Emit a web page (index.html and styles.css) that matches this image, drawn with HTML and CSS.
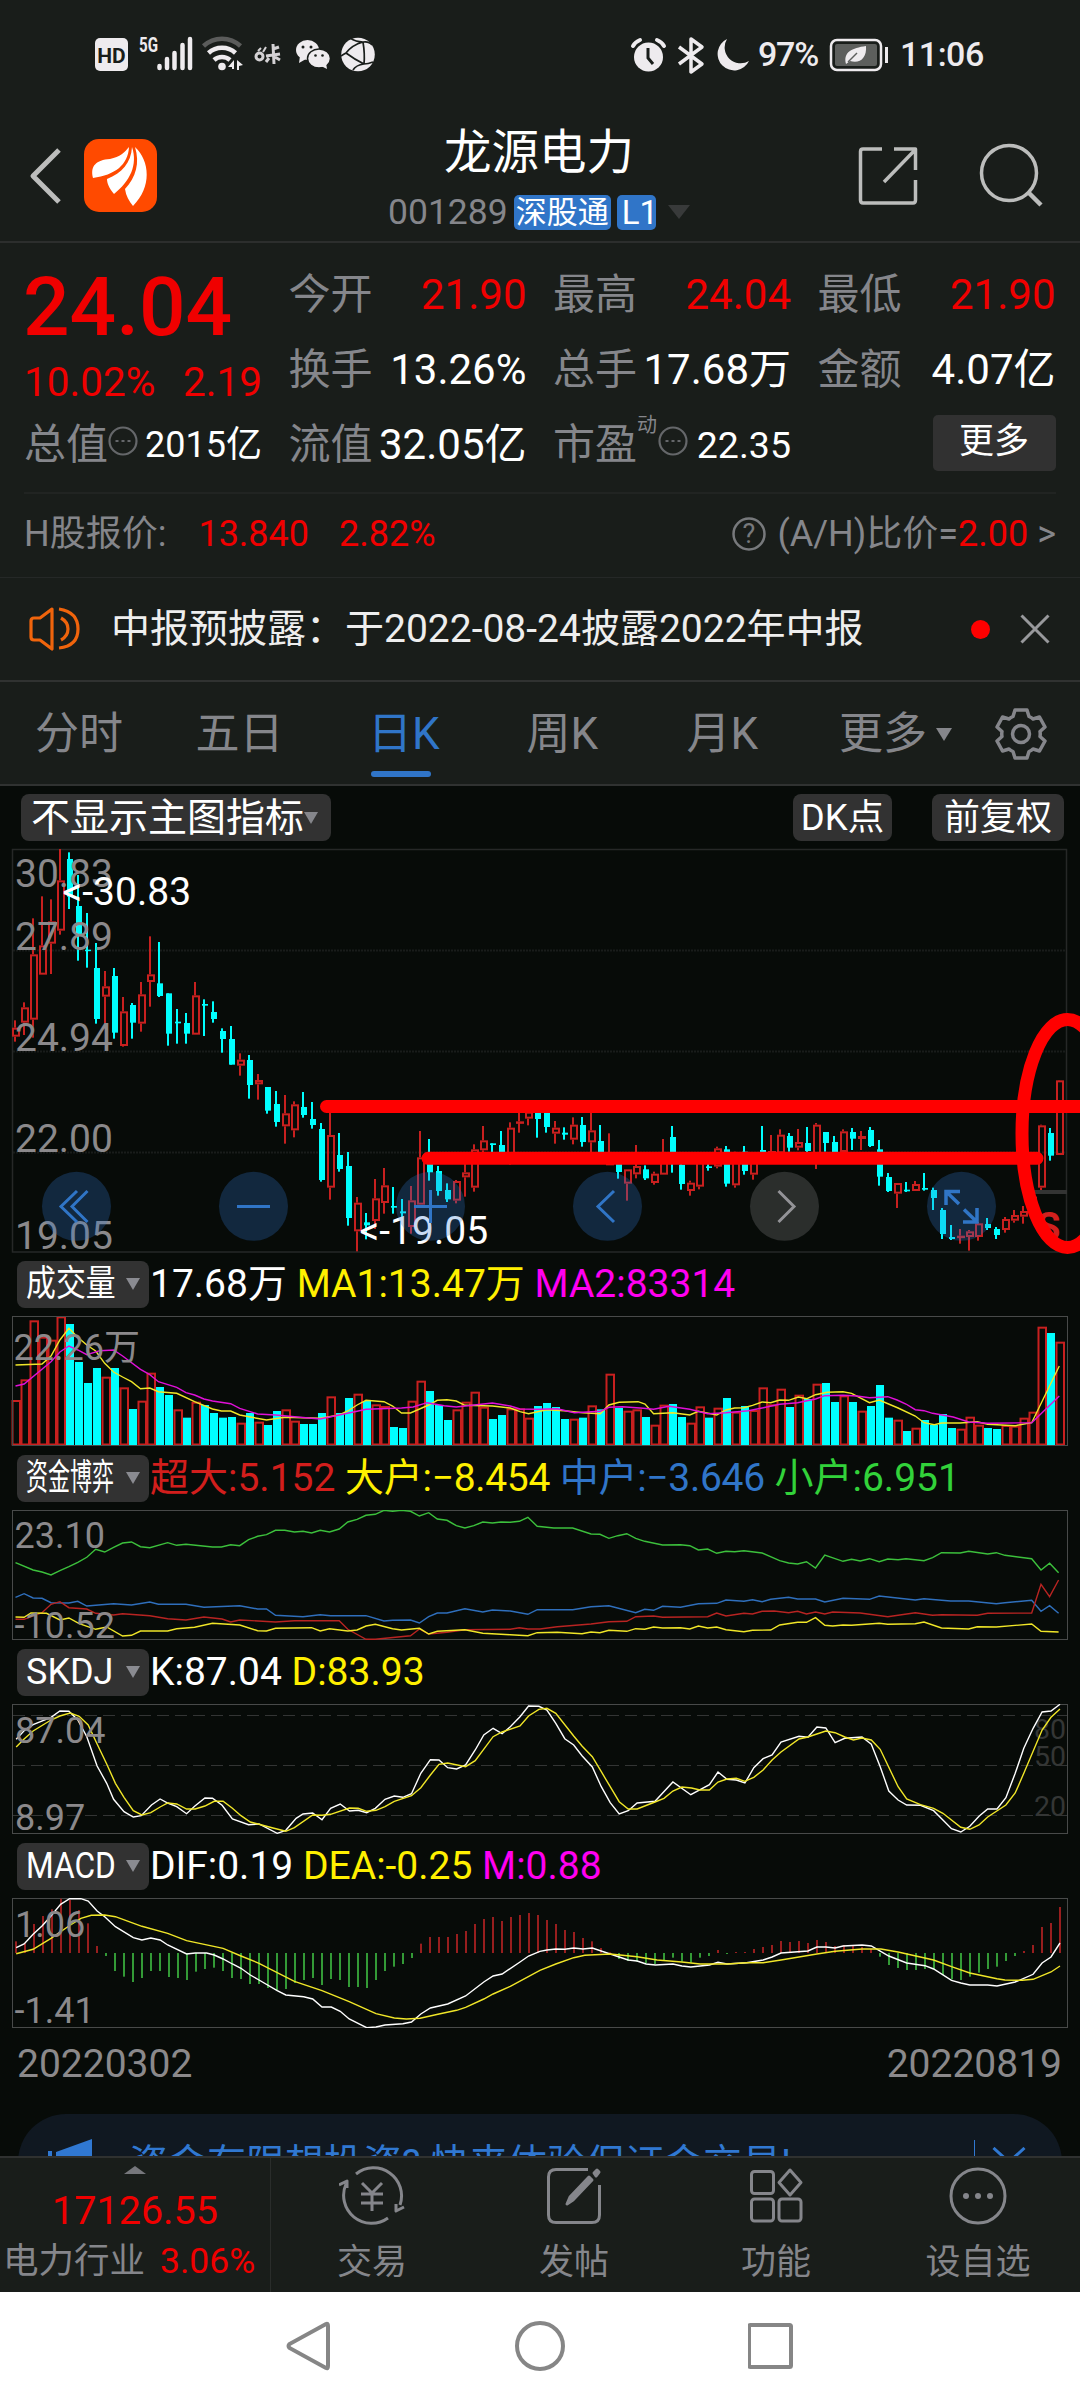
FILE: index.html
```html
<!DOCTYPE html>
<html lang="zh-CN">
<head>
<meta charset="utf-8">
<title>龙源电力 001289</title>
<link rel="stylesheet" href="styles.css">
</head>
<body>
<div class="app">
  <div class="status">
    <div class="status-left">
      <svg width="300" height="60" viewBox="85 25 300 60">
        <rect x="95" y="38" width="33" height="33" rx="5" fill="#eeebee"/>
        <text x="111.500" y="62.500" class="hd">HD</text>
        <text x="139" y="52" class="fiveg" textLength="19" lengthAdjust="spacingAndGlyphs">5G</text>
        <path d="M159.500 66v2M167 59v9M174.500 53v15M182.500 45v23M190 39v29" stroke="#eeebee" stroke-width="4.500" stroke-linecap="round" fill="none"/>
        <g fill="none" stroke="#eeebee" stroke-width="4.500">
          <path d="M203.500 46a27 27 0 0 1 37 0" stroke="#5b5c5b"/>
          <path d="M208.500 53a20 20 0 0 1 27 0"/>
          <path d="M214 60a12 12 0 0 1 16 0"/>
        </g>
        <circle cx="222" cy="66.500" r="3.800" fill="#eeebee"/>
        <path d="M228 67l6-7v9h-2v-2zM237 60l6 5-4 1v4h-2z" fill="#eeebee"/>
        <g fill="none" stroke="#d4d2d4" stroke-width="3">
          <circle cx="259.500" cy="56.500" r="3.500"/><path d="M258 51l3-3M263 52l3-5" stroke-width="2"/><path d="M273 44l1 20M266 56l14-2M273 49l6-2M269 58l-3 4M275 57l5 3"/>
        </g>
        <g fill="#eeebee">
          <ellipse cx="307.500" cy="50" rx="11.500" ry="10"/><path d="M300 56l-1 7 7-4z"/>
          <ellipse cx="319" cy="58.500" rx="11.500" ry="9.500" stroke="#191d1a" stroke-width="1.500"/><path d="M321 66l6 3-1-6z"/>
        </g>
        <g fill="#191d1a"><circle cx="303" cy="47" r="1.500"/><circle cx="311" cy="47" r="1.500"/><circle cx="315.500" cy="55.500" r="1.300"/><circle cx="322.500" cy="55.500" r="1.300"/></g>
        <circle cx="358" cy="54.500" r="16.800" fill="#eeebee"/>
        <path d="M350 38q6 4 13 4M363 42q6-1 9 3M363 42q2 12 1 22M364 64q-8 1-11 6M346 53q8 6 18 11M346 53q6-8 17-11M341 56q3-2 5-3M364 64q4 0 9-2" stroke="#191d1a" stroke-width="1.700" fill="none"/>
      </svg>
    </div>
    <div class="status-right">
      <svg width="120" height="40" viewBox="630 34 120 40">
        <circle cx="648.500" cy="56" r="14.500" fill="#eeebee"/>
        <path d="M648 47v10l5 6" stroke="#191d1a" stroke-width="3" fill="none"/>
        <path d="M633 45a14 14 0 0 1 7-6M657 39a14 14 0 0 1 7 6" stroke="#eeebee" stroke-width="4" stroke-linecap="round" fill="none"/>
        <path d="M679 46l23 17-11 8V38l11 8-23 17" stroke="#eeebee" stroke-width="3.500" fill="none" stroke-linejoin="round"/>
        <path d="M727 38a16.500 16.500 0 1 0 22 22a16 16 0 0 1-22-22z" fill="#eeebee"/>
      </svg>
      <span class="pct">97%</span>
      <svg width="60" height="34" viewBox="829 38 60 34">
        <rect x="831" y="40" width="50" height="30" rx="6" fill="none" stroke="#eeebee" stroke-width="2.500"/>
        <rect x="835" y="44" width="42" height="22" rx="2" fill="#5d5f5d"/>
        <path d="M846 64c-3-12 6-16 20-18c1 12-6 18-16 15zM846 65l12-12" fill="#eeebee"/>
        <path d="M848 62l9-9" stroke="#5d5f5d" stroke-width="1.500"/>
        <path d="M886.500 47v16" stroke="#eeebee" stroke-width="3"/>
      </svg>
      <span class="clock">11:06</span>
    </div>
  </div>

  <header class="head">
    <div class="head-left">
      <svg width="34" height="60" viewBox="0 0 34 60"><path d="M30 4L4 30L30 56" class="ic-head" stroke-width="5"/></svg>
      <svg width="73" height="73" viewBox="0 0 73 73">
        <rect width="73" height="73" rx="15" fill="#ff4a00"/>
        <path d="M9 39C6 27 12 21 26 20C36 18 41 13 45 8C44 26 31 36 9 39Z" fill="#fff"/>
        <path d="M30 55C25 49 23 44 23 40C38 34 47 24 48 8C54 26 46 42 30 55Z" fill="#fff"/>
        <path d="M49 67C45 62 42 57 41 50C52 38 56 24 51 8C66 22 68 48 49 67Z" fill="#fff"/>
      </svg>
    </div>
    <div class="head-mid">
      <h1 class="title">龙源电力</h1>
      <div class="sub">
        <span>001289</span><span class="badge">深股通</span><span class="badge badge-l1">L1</span>
        <svg class="tri" width="22" height="14" viewBox="0 0 22 14"><path d="M0 0h22L11 14z" fill="#383a3a"/></svg>
      </div>
    </div>
    <div class="head-right">
      <svg width="60" height="60" viewBox="0 0 60 60"><path d="M24 3H5Q2.500 3 2.500 5.500V54Q2.500 57 5 57H55Q57.500 57 57.500 54V34M36 3H57.500V24M57 4L26 36" class="ic-head" stroke-width="3.500"/></svg>
      <svg width="66" height="66" viewBox="0 0 66 66"><circle cx="30" cy="30" r="27.500" class="ic-head" stroke-width="3.500"/><path d="M49 49L62 62" class="ic-head" stroke-width="4.500"/></svg>
    </div>
  </header>

  <section class="quote">
    <div class="last">
      <div class="price">24.04</div>
      <div class="chg"><span>10.02%</span><span>2.19</span></div>
    </div>
    <div class="cell"><span>今开</span><b class="up">21.90</b></div>
    <div class="cell"><span>最高</span><b class="up">24.04</b></div>
    <div class="cell"><span>最低</span><b class="up">21.90</b></div>
    <div class="cell"><span>换手</span><b>13.26%</b></div>
    <div class="cell"><span>总手</span><b>17.68万</b></div>
    <div class="cell"><span>金额</span><b>4.07亿</b></div>
    <div class="cell"><span class="with-dots">总值<svg class="dots" width="30" height="30" viewBox="0 0 30 30"><circle cx="15" cy="15" r="13.500"/><path d="M7.500 15h3M13.500 15h3M19.500 15h3"/></svg></span><b class="small">2015亿</b></div>
    <div class="cell"><span>流值</span><b>32.05亿</b></div>
    <div class="cell"><span class="with-dots">市盈<sup>动</sup><svg class="dots" width="30" height="30" viewBox="0 0 30 30"><circle cx="15" cy="15" r="13.500"/><path d="M7.500 15h3M13.500 15h3M19.500 15h3"/></svg></span><b class="mid">22.35</b></div>
    <div class="cell cell-more"><span class="more">更多</span></div>
  </section>

  <section class="hshare">
    <span>H股报价:</span><span class="up h1v">13.840</span><span class="up h2v">2.82%</span>
    <span class="ratio">
      <svg width="34" height="34" viewBox="0 0 34 34"><circle cx="17" cy="17" r="15.500" fill="none" stroke="#77797c" stroke-width="2.500"/><text x="17" y="26" class="qm">?</text></svg>
      <span>(A/H)比价=<em class="up">2.00</em> &gt;</span>
    </span>
  </section>

  <section class="notice">
    <svg width="54" height="46" viewBox="0 0 54 46" fill="none" stroke="#f0640c" stroke-width="3.200" stroke-linejoin="round"><path d="M24 3L12 12H6Q3 12 3 15V31Q3 34 6 34H12L24 43ZM33 12Q40 16 40 23T33 34M31 3Q50 6 50 23T31 42"/></svg>
    <span class="notice-text">中报预披露：于2022-08-24披露2022年中报</span>
    <i class="dot"></i>
    <svg width="30" height="30" viewBox="0 0 30 30"><path d="M1.500 1.500L28.500 28.500M28.500 1.500L1.500 28.500" stroke="#98999c" stroke-width="3"/></svg>
  </section>

  <nav class="tabs">
    <span>分时</span><span>五日</span><span class="on">日K</span><span>周K</span><span>月K</span>
    <span class="tab-more">更多<svg width="16" height="13" viewBox="0 0 16 13"><path d="M0 0h16L8 13z" fill="#85868b"/></svg></span>
    <svg width="52" height="52" viewBox="-26 -26 52 52" fill="none" stroke="#85868b" stroke-width="3.500" stroke-linejoin="round"><path d="M-6 -24H6L8 -17.500Q10.500 -16.500 12 -15L18.500 -17L24 -7L19 -2.500Q19.500 0 19 2.500L24 7L18.500 17L12 15Q10.500 16.500 8 17.500L6 24H-6L-8 17.500Q-10.500 16.500 -12 15L-18.500 17L-24 7L-19 2.500Q-19.500 0 -19 -2.500L-24 -7L-18.500 -17L-12 -15Q-10.500 -16.500 -8 -17.500Z"/><circle r="8.500"/></svg>
  </nav>

  <main class="charts">
    <div class="tools">
      <span class="chip chip-main">不显示主图指标<svg width="14" height="12" viewBox="0 0 14 12"><path d="M0 0h14L7 12z" fill="#85868b"/></svg></span>
      <span class="chip chip-dk">DK点</span>
      <span class="chip chip-fq">前复权</span>
    </div>

    <svg class="pane pane-main" width="1080" height="403" viewBox="0 849 1080 403">
      <path d="M13 950.500H1067M13 1051.500H1067M13 1152.500H1067" stroke="#191c1a" stroke-width="2" stroke-dasharray="2 1"/>
      <rect x="12.500" y="849.500" width="1054" height="402.500" fill="none" stroke="#262827" stroke-width="1.500"/>
      <rect x="1034" y="1190" width="33" height="4" fill="#333433"/>
      <g id="candles"></g>
      <g class="axis">
        <text x="15" y="886.500">30.83</text><text x="15" y="949.500">27.89</text><text x="15" y="1050.500">24.94</text><text x="15" y="1152">22.00</text><text x="15" y="1249">19.05</text>
      </g>
      <text x="1037" y="1240" class="sell">S</text>
      <g class="mark"><text x="62.500" y="905">&lt;-30.83</text><text x="359.500" y="1244">&lt;-19.05</text></g>
      <g fill="#3078d2" fill-opacity=".27">
        <circle cx="76.500" cy="1206.300" r="34.500"/><circle cx="253.500" cy="1206.300" r="34.500"/><circle cx="430.500" cy="1206.300" r="34.500"/><circle cx="607.500" cy="1206.300" r="34.500"/><circle cx="961.500" cy="1206.300" r="34.500"/>
      </g>
      <circle cx="784.500" cy="1206.300" r="34.500" fill="#8c8c90" fill-opacity=".27"/>
      <g fill="none" stroke="#3075c6" stroke-width="3">
        <path d="M77 1191L61 1206.500L77 1222M87.500 1191L72 1206.500L87.500 1222M237 1206.500H270M414 1206.500H447M430.500 1190V1223M614 1191L598 1206.500L614 1222"/>
        <path d="M946 1205V1191.500H960M946 1191.500L959 1204M964 1209.500L977 1222M963 1222H977V1208" stroke-width="3.500"/>
      </g>
      <path d="M778.500 1191L794 1206.500L778.500 1222" fill="none" stroke="#939397" stroke-width="3"/>
      <g fill="none" stroke="#ff0000" stroke-width="13" stroke-linecap="round">
        <path d="M326.500 1106.500H1090M428 1158.300H1037"/><ellipse cx="1067.500" cy="1133.500" rx="45.500" ry="114"/>
      </g>
    </svg>

    <div class="ind"><span class="chip chip-ind"><span class="w83">成交量</span><i></i></span><p><span>17.68万</span> <span class="y">MA1:13.47万</span> <span class="m">MA2:83314</span></p></div>
    <svg class="pane" width="1080" height="130" viewBox="0 1316 1080 130">
      <g id="volume"></g>
      <rect class="frame" x="12.500" y="1316.500" width="1055" height="129"/>
      <g id="volume-ma"></g>
      <g class="axis s"><text x="13.500" y="1360">22.26万</text></g>
    </svg>

    <div class="ind"><span class="chip chip-ind"><span class="w60">资金博弈</span><i></i></span><p><span class="r">超大:5.152</span> <span class="y neg">大户:−8.454</span> <span class="b neg">中户:−3.646</span> <span class="g">小户:6.951</span></p></div>
    <svg class="pane" width="1080" height="130" viewBox="0 1510 1080 130">
      <rect class="frame" x="12.500" y="1510.500" width="1055" height="129"/>
      <g id="funds"></g>
      <g class="axis s"><text x="14.500" y="1548">23.10</text><text x="14.500" y="1637.500">-10.52</text></g>
    </svg>

    <div class="ind"><span class="chip chip-ind"><span>SKDJ</span><i></i></span><p><span>K:87.04</span> <span class="y">D:83.93</span></p></div>
    <svg class="pane" width="1080" height="130" viewBox="0 1704 1080 130">
      <path d="M13 1715.500H1067M13 1765.500H1067M13 1815.500H1067" stroke="#333534" stroke-width="1.200" stroke-dasharray="12 6"/>
      <rect class="frame" x="12.500" y="1704.500" width="1055" height="129"/>
      <g class="levels"><text x="1066" y="1738.500">80</text><text x="1066" y="1766">50</text><text x="1066" y="1815.500">20</text></g>
      <g id="skdj"></g>
      <g class="axis s"><text x="15" y="1742.500">87.04</text><text x="15" y="1830">8.97</text></g>
    </svg>

    <div class="ind"><span class="chip chip-ind"><span class="w88">MACD</span><i></i></span><p><span>DIF:0.19</span> <span class="y">DEA:-0.25</span> <span class="m">M:0.88</span></p></div>
    <svg class="pane" width="1080" height="130" viewBox="0 1898 1080 130">
      <rect class="frame" x="12.500" y="1898.500" width="1055" height="129"/>
      <g id="macd"></g>
      <g class="axis s"><text x="15" y="1936.500">1.06</text><text x="14.500" y="2023">-1.41</text></g>
    </svg>

    <div class="dates"><span>20220302</span><span>20220819</span></div>

    <div class="promo">
      <svg width="46" height="46" viewBox="0 0 46 46" fill="#3078d2"><path d="M8 13L44 0V42L8 30ZM0 12h4v18H0z"/></svg>
      <span class="promo-text">资金有限想投资? 快来体验保证金交易!</span>
      <i class="bar"></i>
      <svg width="34" height="30" viewBox="0 0 34 30"><path d="M1.500 1L17 15L32.500 1M1.500 29L17 15L32.500 29" stroke="#3078d2" stroke-width="3" fill="none"/></svg>
    </div>
  </main>

  <footer class="dock">
    <div class="index">
      <svg width="22" height="8" viewBox="0 0 22 8"><path d="M11 0L22 8H0z" fill="#76777c"/></svg>
      <div class="index-val">17126.55</div>
      <div class="index-name"><span>电力行业</span><span class="up">3.06%</span></div>
    </div>
    <div class="act">
      <svg width="66" height="60" viewBox="-33 -30 66 60" class="ic-dock"><path d="M-16 -22A28 28 0 0 1 28 9M16 22A28 28 0 0 1 -26 -12M-33 -11L-25 -15V-8M32 11L24 15V8M-10 -13L0 -3L10 -13M0 -3V15M-11 -2H11M-11 7H11"/></svg>
      <span>交易</span>
    </div>
    <div class="act">
      <svg width="66" height="60" viewBox="-33 -30 66 60" class="ic-dock"><path d="M14 -26.500H-18Q-25.500 -26.500 -25.500 -19V19Q-25.500 26.500 -18 26.500H18Q25.500 26.500 25.500 19V-11"/><path d="M-7 8L-4 1L15 -19L18 -16L-1 4ZM20 -23L23 -26L25 -24L22 -20Z" fill="#85868b"/></svg>
      <span>发帖</span>
    </div>
    <div class="act">
      <svg width="66" height="60" viewBox="-33 -30 66 60" class="ic-dock"><rect x="-24.500" y="-24.500" width="22" height="22" rx="3"/><rect x="-24.500" y="3" width="22" height="22" rx="3"/><rect x="3" y="3" width="22" height="22" rx="3"/><path d="M14 -26L25 -13.500L14 -1L3 -13.500Z"/></svg>
      <span>功能</span>
    </div>
    <div class="act">
      <svg width="66" height="60" viewBox="-33 -30 66 60" class="ic-dock"><circle r="27"/><g fill="#85868b" stroke="none"><circle cx="-12" r="3"/><circle r="3"/><circle cx="12" r="3"/></g></svg>
      <span>设自选</span>
    </div>
  </footer>

  <div class="sysnav">
    <svg width="46" height="52" viewBox="0 0 46 52"><path d="M40 4Q42 3 42 6V46Q42 49 40 48L3.500 28Q1.500 26 3.500 24Z"/></svg>
    <svg width="52" height="52" viewBox="0 0 52 52"><circle cx="26" cy="26" r="23"/></svg>
    <svg width="46" height="52" viewBox="0 0 46 52"><rect x="1" y="5" width="42" height="42" rx="1.500"/></svg>
  </div>
</div>
<script src="chart.js"></script>
</body>
</html>
```
FILE: styles.css
```css
* { box-sizing: border-box; }
body {
  margin: 0;
  background: #191d1a;
  color: #85868b;
  font-family: Roboto, "Noto Sans CJK SC", sans-serif;
}
.app { width: 1080px; height: 2400px; overflow: hidden; display: flex; flex-direction: column; }
h1, p { margin: 0; font-weight: 400; }
b { font-weight: 400; color: #fff; }
em { font-style: normal; }
svg { display: block; flex: none; }
span { white-space: nowrap; }
.up, b.up { color: #f00000; }

.status { height: 109px; display: flex; justify-content: space-between; padding: 0 96px 0 85px; color: #eeebee; font-size: 34px; font-weight: 500; line-height: 109px; }
.status-left { padding-top: 25px; }
.status-right { display: flex; align-items: center; }
.hd { font: 700 21px Roboto; fill: #191d1a; text-anchor: middle; }
.fiveg { font: 700 20px Roboto; fill: #eeebee; }
.pct { margin-left: 8px; width: 71px; letter-spacing: -1.2px; }
.clock { margin-left: 11px; width: 84px; letter-spacing: -.5px; }

.head { height: 134px; display: flex; align-items: flex-start; justify-content: space-between; border-bottom: 2px solid #2c2e2d; }
.head-left { width: 330px; display: flex; align-items: center; gap: 21px; padding: 30px 0 0 29px; }
.head-mid { width: 420px; }
.title { font-size: 47.500px; line-height: 68px; padding: 10px 2px 0 0; color: #fff; text-align: center; }
.sub { display: flex; align-items: center; height: 50px; padding-left: 58px; font-size: 35.500px; }
.badge { background: #3075c8; color: #fff; font-size: 31px; line-height: 35px; height: 35px; border-radius: 5px; padding: 0 2px; margin-left: 6px; }
.badge-l1 { padding: 0 5px; width: 39px; font-size: 33px; }
.tri { margin-left: 12px; }
.head-right { width: 330px; display: flex; align-items: center; gap: 61px; padding: 34px 0 0 108px; }
.ic-head { fill: none; stroke: #bcbdbc; stroke-linejoin: round; }

.quote { height: 249px; padding: 14px 24px 0; display: grid; grid-template-columns: repeat(4, 238px); grid-template-rows: repeat(3, 75px); column-gap: 26.500px; font-size: 42px; }
.last { grid-row: span 2; color: #f00000; }
.price { font-size: 82px; font-weight: 500; line-height: 101px; margin-left: -1px; }
.chg { display: flex; justify-content: space-between; line-height: 49px; font-size: 40.500px; }
.cell { display: flex; justify-content: space-between; align-items: center; line-height: 76px; white-space: nowrap; }
.with-dots { display: flex; }
.with-dots sup { font-size: 20px; line-height: 36px; width: 21px; vertical-align: top; }
.with-dots .dots { margin-top: 19px; }
.dots { fill: none; stroke: #65676a; stroke-width: 2.2; }
.small { font-size: 36px; }
.mid { font-size: 37.500px; }
.cell-more { justify-content: flex-end; }
.more { width: 123px; height: 56px; line-height: 53px; margin-top: -3px; border-radius: 5px; background: #313131; color: #fff; font-size: 35px; text-align: center; }

.hshare { height: 85px; margin: 0 24px; border-top: 2px solid #212422; display: flex; align-items: center; padding-bottom: 3px; line-height: 80px; font-size: 36px; }
.h1v { margin-left: 32px; }
.h2v { margin-left: 30px; }
.ratio { margin-left: auto; display: flex; align-items: center; gap: 11px; }
.qm { font: 27px Roboto; fill: #77797c; text-anchor: middle; }

.notice { height: 105px; border-top: 1px solid #252827; border-bottom: 2px solid #303231; display: flex; align-items: center; padding: 0 30px 0 28px; color: #eee; font-size: 39px; line-height: 100px; }
.notice-text { margin-left: 29px; width: 860px; }
.dot { width: 19px; height: 19px; border-radius: 50%; background: #f00; margin-right: auto; flex: none; }

.tabs { height: 104px; border-bottom: 2px solid #303231; display: grid; grid-template-columns: 160.500px 172.500px 158.500px 160px 152.500px 156px 52px; align-items: center; padding: 0 0 0 35px; font-size: 44px; line-height: 104px; }
.tabs .on { color: #3075c8; position: relative; }
.tabs .on::after { content: ""; position: absolute; left: 3px; bottom: 9px; width: 60px; height: 6px; border-radius: 3px; background: #3075c8; }
.tabs .tab-more { display: flex; align-items: center; gap: 9px; }

.charts { height: 1370px; flex: none; background: #070b08; overflow: hidden; }
.tools { height: 63px; display: flex; padding: 8px 16px 0 21px; }
.chip { height: 47px; line-height: 46px; background: #323232; border-radius: 8px; color: #fff; font-size: 39px; display: flex; align-items: center; }
.chip-main { width: 310px; padding-left: 10px; }
.chip-dk { margin-left: auto; width: 99px; justify-content: center; font-size: 36.500px; }
.chip-fq { margin-left: 40px; width: 132px; justify-content: center; font-size: 36px; }
.pane { overflow: hidden; }
.pane-main { overflow: visible; position: relative; }
.frame { fill: none; stroke: #484a49; stroke-width: 1; }
.axis { fill: #8b898b; font-size: 39px; }
.axis.s { font-size: 36px; }
.mark { fill: #fff; font-size: 39px; }
.sell { fill: #d2201e; font-size: 38px; font-weight: 700; }
.levels { fill: #343635; font-size: 28.500px; text-anchor: end; }

.ind { height: 64px; display: flex; align-items: center; padding-left: 17px; color: #fff; font-size: 39px; line-height: 62px; }
.ind p { white-space: pre; margin-left: 1px; }
.chip-ind { width: 132px; font-size: 36px; padding-left: 9px; }
.chip-ind i { margin-left: auto; margin-right: 9px; border: 7.500px solid transparent; border-top: 12px solid #8a8b91; border-bottom: 0; }
.chip-ind span { width: 88px; transform-origin: 0 50%; }
.w88 { transform: scaleX(.88); }
.w83 { transform: scaleX(.83); }
.w60 { transform: scaleX(.61); }
.y { color: #fff000; }
.m { color: #ff00f0; }
.r { color: #d21e1c; }
.b { color: #3075c8; }
.g { color: #32d23a; }
.neg { letter-spacing: -.3px; }

.dates { height: 86px; padding: 0 18px 0 17px; display: flex; justify-content: space-between; font-size: 39px; line-height: 73px; color: #8b898b; }
.promo { margin: 0 18px; height: 96px; border-radius: 48px; background: #101821; display: flex; align-items: center; padding: 0 36px 0 30px; color: #3078d2; font-size: 39px; }
.promo-text { margin-left: 35px; margin-right: auto; margin-top: -5px; }
.bar { width: 1px; height: 44px; background: #3078d2; margin-right: 17px; }

.dock { height: 136px; flex: none; display: flex; background: #191d1a; border-top: 2px solid #2f3130; }
.index { width: 271px; border-right: 1px solid #2a2d2b; display: flex; flex-direction: column; align-items: center; padding-top: 8px; }
.index-val { color: #f00000; font-size: 39.500px; line-height: 74px; }
.index-name { display: flex; gap: 15px; font-size: 35.500px; line-height: 26px; align-self: flex-start; padding-left: 3px; }
.act { width: 202px; flex: none; display: flex; flex-direction: column; align-items: center; padding-top: 8px; font-size: 35px; line-height: 74px; }
.ic-dock { fill: none; stroke: #85868b; stroke-width: 3; stroke-linejoin: round; }

.sysnav { flex: 1; background: #fff; display: flex; justify-content: center; align-items: center; gap: 182px; }
.sysnav svg { fill: none; stroke: #868686; stroke-width: 4; }
```
FILE: chart.js
```js
// Kind, high, body top, body bottom, low; in thirds of a pixel below y = 840.
const CANDLES = `R541,563,590,605 R487,502,548,585 R235,343,539,593 R169,316,404,404 R178,244,311,402 R27,121,272,284 C37,57,170,207 C105,198,283,362 C219,329,333,383 C309,384,537,551
R393,439,470,550 C384,408,578,596 R471,514,618,620 C489,495,548,596 R426,463,551,575 R289,403,426,500 C306,430,468,471 C460,460,581,617 C507,545,550,611 C519,549,581,611
R426,466,584,584 C478,492,497,588 C484,516,537,548 C565,573,597,638 C558,597,674,674 R640,659,677,707 C645,660,735,776 R702,720,733,779 C741,741,812,821 C753,792,846,860
R765,820,859,911 R784,793,871,892 C756,801,825,833 C786,837,855,866 C849,867,1020,1025 R800,885,1043,1079 C879,945,987,995 C936,978,1134,1157 R1071,1088,1174,1234 C1119,1147,1156,1198
R1017,1075,1143,1167 R984,1036,1089,1121 C1041,1098,1103,1121 C1077,1114,1120,1150 R1038,1081,1161,1181 R873,952,1094,1094 C897,940,997,1022 C978,993,1053,1067 C1030,1050,1078,1086 R1020,1023,1082,1090
R960,997,1012,1070 R913,928,1043,1055 R858,901,931,940 C910,910,915,950 C873,915,940,945 R847,863,970,974 R800,844,849,878 R800,815,836,856 C780,800,837,893 C800,805,861,878
R843,863,881,911 C862,878,884,899 R832,854,899,913 C831,855,906,920 R810,871,907,945 C855,903,945,950 R880,945,976,976 C950,960,996,1016 R988,988,1031,1082 R915,978,1003,1015
C976,988,1015,1020 R995,1001,1029,1034 R897,950,1004,1004 C858,891,945,998 C960,974,1032,1049 R1022,1028,1053,1067 R950,960,1040,1048 C972,979,984,992 R920,925,980,985 C918,928,1031,1040
R935,950,1036,1043 C918,935,993,1004 R950,960,1004,1019 C858,930,936,940 R885,933,940,940 R868,884,940,940 C879,888,923,935 R867,906,923,931 C861,909,933,936 R849,854,950,987
C876,876,909,935 C888,906,936,936 R868,874,936,936 C864,876,896,930 R873,888,897,930 C861,870,918,921 C900,928,1010,1037 C999,1011,1053,1056 R1029,1029,1061,1104 C1026,1049,1054,1056
R1023,1032,1053,1053 C999,1044,1049,1052 C1043,1050,1074,1110 C1104,1110,1182,1197 C1155,1191,1197,1200 R1167,1187,1192,1211 R1170,1174,1191,1232 R1146,1150,1191,1202 C1134,1152,1164,1170 C1161,1167,1185,1197
R1131,1137,1170,1178 R1110,1125,1142,1148 R1098,1113,1130,1151 R1065,1070,1115,1115 R854,856,1043,1050 C864,879,947,962 R720,721,945,945`;

// Kind and bar top; in thirds of a pixel below y = 1250.
const VOLUME = `R450 R388 R211 R260 R269 R199 C222 C336 C399 C354 R380 C354 R412 C477 R452 R368 C411 C435 R478 C503 R455 C465 C489 C503 C501 R518 C489 R515 C525 C483 R478 R512 C522 C522 C489 R439 C489 C444 R431 C453 R463 R468 C531 C534 R452 R392 C423 C465 C510 R478 R455 R425 R470 C507 C495 R475 R475 R503 C468
C459 C471 C507 R506 C503 R466 C478 R371 C474 R482 R478 C501 R524 R464 C462 C501 R518 R469 C503 R473 C444 R485 C468 R480 R412 R463 R416 C471 R434 C447 R401 C399 C456 R436 C456 R482 C468 C405 C503 R509 C543 R533 C510 C525 C492 C534 R536 R500 R524 C534 C537 R525 R527 R503 R485 R230 C249 R275`;

// Histogram bar ends around the zero line at 939, thirds of a pixel below y = 1640.
const MACD = [904,910,852,828,808,776,780,810,850,918,948,993,1010,1026,1014,993,993,1011,1014,1020,995,987,983,993,1014,1017,1032,1032,1044,1052,1047,1029,1020,1014,1035,1017,1020,1041,1041,1044,1020,993,980,972,954,911,891,891,891,882,873,852,837,831,843,831,825,819,825,
840,852,870,876,894,904,924,937,957,963,965,970,972,960,953,965,968,953,948,930,942,936,936,927,921,915,903,906,903,909,900,906,918,915,918,921,927,950,975,984,990,990,987,987,1005,1018,1020,1010,998,987,980,963,948,933,915,861,849,801];

// Curves: left and right half of the pane, as "x,y" pairs on a 1568-unit half.
const CURVES = [
  ['volume-ma', '#f0e628', 1250,
   '45,345 122,342 148,318 174,270 200,235 226,262 252,285 278,303 304,340 330,366 356,381 382,395 408,416 435,414 460,425 513,430 565,455 617,477 643,483 670,483 696,495 774,510 827,502 930,505 985,495 1010,483 1037,465 1063,451 1115,455 1140,468 1166,489 1192,489 1245,465 1270,451 1298,449 1325,453 1350,466 1430,468 1482,474 1510,485 1535,491 1568,484',
   '20,479 70,482 125,488 175,491 200,465 230,457 285,455 305,462 330,491 385,488 435,495 460,484 513,495 540,480 565,474 592,473 617,466 645,456 670,458 696,450 722,451 750,441 775,446 800,434 835,427 880,425 905,430 957,458 985,450 1040,474 1090,498 1115,518 1145,524 1166,519 1220,519 1270,515 1300,523 1380,527 1428,518 1508,348'],
  ['volume-ma', '#e010d8', 1250,
   '45,408 70,402 148,335 174,306 200,288 226,300 252,314 290,302 330,300 356,318 408,358 435,374 460,395 513,412 540,428 565,435 592,447 617,453 670,461 696,475 748,492 800,495 855,500 930,507 985,495 1037,484 1063,478 1166,474 1200,471 1240,458 1290,467 1325,471 1430,459 1482,468 1510,477 1568,478',
   '50,476 100,488 175,484 200,472 240,470 300,475 330,478 375,469 435,478 487,491 540,488 605,482 645,474 696,463 748,458 800,447 827,437 880,436 920,438 957,443 1010,440 1037,450 1063,462 1090,479 1115,482 1140,490 1200,501 1245,516 1300,520 1428,518 1508,438'],
  ['funds', '#3cc03c', 1250,
   '45,938 96,960 122,966 148,975 174,962 200,950 226,937 252,922 278,898 304,906 330,892 356,879 382,876 408,890 435,893 487,878 513,886 540,883 617,891 643,891 670,884 696,887 722,869 748,859 774,854 800,841 827,841 855,846 880,844 905,849 930,841 957,846 985,837 1010,816 1037,808 1063,796 1090,793 1115,781 1140,784 1166,781 1192,784 1218,798 1245,788 1270,807 1298,811 1325,827 1350,834 1376,827 1402,816 1430,819 1455,816 1482,817 1508,814 1533,802 1560,829',
   '40,834 95,834 148,852 174,853 200,865 226,857 252,851 278,865 304,874 356,885 408,884 435,887 460,900 487,897 513,910 540,904 565,905 592,902 645,909 696,932 722,939 748,942 774,935 800,954 827,915 880,934 905,928 930,933 957,926 985,935 1010,927 1040,929 1063,926 1115,932 1140,923 1166,908 1220,909 1245,904 1300,912 1325,908 1350,916 1428,926 1455,960 1480,940 1506,968'],
  ['funds', '#2f6fbc', 1250,
   '45,1042 70,1031 96,1044 122,1045 148,1058 200,1059 226,1054 252,1068 330,1061 382,1065 435,1056 460,1063 540,1063 592,1072 696,1067 748,1077 774,1077 800,1096 880,1100 930,1094 960,1097 1063,1097 1115,1113 1140,1111 1192,1110 1218,1119 1245,1100 1270,1089 1298,1089 1350,1076 1402,1086 1430,1080 1482,1083 1533,1093 1560,1079',
   '95,1079 148,1070 200,1067 278,1088 304,1078 330,1081 356,1069 408,1072 460,1061 513,1060 540,1050 592,1054 617,1049 645,1055 670,1048 722,1042 748,1047 800,1047 827,1056 880,1045 957,1048 985,1038 1090,1050 1115,1046 1192,1053 1245,1053 1325,1061 1350,1058 1428,1051 1455,1084 1480,1067 1506,1090'],
  ['funds', '#b82422', 1250,
   '45,1108 70,1108 122,1088 148,1063 174,1055 200,1073 252,1077 278,1090 330,1095 356,1091 435,1097 487,1106 540,1110 592,1101 645,1107 670,1116 696,1110 800,1116 855,1112 985,1112 1010,1138 1063,1168 1090,1168 1192,1157 1218,1137 1245,1152 1298,1147 1350,1139 1482,1138 1508,1133 1533,1137',
   '0,1137 50,1130 148,1122 200,1115 252,1114 278,1100 330,1098 356,1102 487,1100 513,1089 540,1098 592,1090 617,1092 645,1084 680,1083 722,1088 748,1084 774,1092 800,1086 827,1092 850,1086 930,1089 1010,1100 1090,1088 1140,1096 1166,1094 1270,1096 1300,1090 1428,1089 1455,1003 1480,1040 1506,990'],
  ['funds', '#f0e628', 1250,
   '45,1101 70,1102 90,1089 135,1090 174,1110 200,1104 230,1121 278,1138 310,1131 356,1158 382,1156 408,1143 487,1143 513,1136 565,1132 617,1120 696,1125 748,1142 774,1143 800,1135 905,1133 930,1143 957,1136 1010,1143 1037,1140 1063,1128 1090,1123 1140,1136 1166,1140 1218,1135 1245,1152 1270,1144 1350,1139 1402,1150 1482,1154 1533,1157 1560,1148',
   '50,1147 122,1151 148,1146 174,1148 200,1141 252,1144 278,1136 304,1138 330,1131 356,1134 408,1133 435,1137 460,1128 487,1134 513,1131 540,1139 592,1145 617,1141 670,1140 696,1125 748,1117 774,1117 800,1103 827,1126 850,1128 880,1125 905,1126 985,1120 1010,1123 1090,1121 1115,1116 1166,1134 1245,1137 1270,1130 1325,1131 1428,1122 1455,1144 1506,1146'],
  ['skdj', '#ffffff', 1640,
   '47,298 70,272 96,254 148,232 174,213 200,214 226,240 252,290 282,378 310,430 330,478 360,515 387,531 410,527 440,495 465,477 487,489 513,500 542,521 565,499 595,474 617,475 645,496 675,537 722,554 752,552 805,580 830,571 860,535 880,522 908,519 935,539 960,505 988,492 1015,513 1040,511 1065,518 1090,505 1118,478 1145,468 1170,472 1195,461 1222,400 1250,359 1275,360 1300,383 1326,387 1352,375 1380,330 1405,285 1432,265 1458,281 1482,260 1510,230 1535,198 1565,199',
   '20,210 46,250 72,296 98,315 122,347 152,381 178,440 204,488 230,522 256,512 282,489 334,484 386,426 438,464 492,434 517,396 543,418 570,420 595,429 621,383 648,356 674,345 700,306 752,289 778,292 804,261 830,264 857,308 885,295 935,291 962,313 988,380 1013,453 1040,480 1065,495 1105,496 1143,512 1170,540 1195,566 1222,576 1248,559 1275,529 1300,507 1327,507 1353,473 1380,400 1405,325 1432,265 1458,216 1484,213 1510,193'],
  ['skdj', '#f0e628', 1640,
   '47,321 70,297 96,273 148,240 174,228 204,219 230,229 256,255 282,312 310,372 335,430 360,472 387,512 412,525 438,518 465,501 487,489 513,492 542,507 567,507 595,498 622,484 648,484 675,505 700,527 727,546 752,553 790,563 830,574 855,563 908,525 935,526 960,523 1015,504 1040,505 1065,514 1092,511 1118,500 1145,484 1195,467 1222,443 1250,405 1275,373 1300,369 1352,380 1380,362 1432,290 1458,276 1510,258 1535,228 1565,208',
   '20,205 46,220 98,288 122,318 152,350 178,395 204,440 230,485 256,507 282,507 334,486 360,475 386,453 412,441 440,444 465,450 492,450 517,426 543,417 570,415 595,424 621,412 648,390 674,360 700,336 752,297 778,291 830,273 857,278 885,291 910,300 935,294 962,300 988,328 1040,440 1065,477 1105,494 1143,505 1170,520 1222,562 1248,568 1275,555 1300,531 1353,495 1380,459 1405,400 1458,270 1484,232 1510,207'],
  ['macd', '#ffffff', 1640,
   '47,923 70,912 96,883 122,858 148,828 176,793 202,776 235,776 256,783 282,813 304,830 335,860 387,893 412,900 438,894 465,900 487,915 542,942 567,939 600,939 622,945 648,957 675,972 700,985 727,1005 752,1020 805,1052 830,1065 882,1070 908,1077 935,1101 962,1101 988,1114 1014,1137 1040,1150 1065,1163 1092,1161 1118,1155 1170,1151 1195,1146 1222,1122 1250,1104 1300,1092 1352,1068 1405,1026 1432,1008 1458,1002 1510,966 1535,948 1568,934',
   '20,930 46,927 72,928 98,924 125,927 152,924 204,942 256,960 282,963 308,972 335,975 386,972 412,978 438,981 492,975 517,967 543,972 600,968 648,960 674,951 700,939 778,933 804,921 830,921 857,924 880,918 935,915 962,918 1013,948 1065,969 1118,977 1143,987 1195,1021 1222,1029 1248,1035 1300,1035 1327,1038 1380,1026 1432,1003 1458,969 1484,951 1510,909'],
  ['macd', '#f0e628', 1640,
   '47,941 96,928 148,895 200,858 235,835 265,826 304,825 335,830 412,859 487,880 542,902 648,925 700,948 752,970 855,1024 935,1052 1014,1085 1092,1121 1145,1134 1180,1137 1220,1135 1275,1122 1326,1111 1352,1102 1405,1077 1432,1062 1482,1039 1568,991',
   '46,972 98,953 130,946 204,942 282,950 340,960 412,966 465,972 543,972 600,968 648,968 700,960 804,942 857,934 935,927 990,927 1040,936 1143,960 1195,980 1248,999 1327,1016 1350,1020 1400,1021 1432,1018 1484,996 1510,978']
];

const PITCH = 9;
const add = (id, html) => { document.getElementById(id).innerHTML += html; };
const rect = (x, y, w, h, attrs) => `<rect x="${x}" y="${y}" width="${w}" height="${h}" ${attrs}/>`;
const CYAN = 'fill="#00ffff"';
const RED = 'fill="none" stroke="#c8201f" stroke-width="2"';

add('candles', CANDLES.split(/\s+/).map((c, i) => {
  const x = 15 + PITCH * i;
  const [hi, top, bot, lo] = c.slice(1).split(',').map(v => 840 + v / 3);
  if (c[0] === 'C') {
    return rect(x - 1, hi, 2, lo - hi, CYAN) + rect(x - 2, top, 6, Math.max(bot - top, 1.5), CYAN);
  }
  const wick = 'fill="#c8201f"';
  return rect(x - 1, hi, 2, Math.max(top - hi, 0), wick) + rect(x - 1, bot, 2, Math.max(lo - bot, 0), wick) +
    rect(x - 2, top + 1, 6, Math.max(bot - top - 2, 0.5), RED);
}).join(''));

add('volume', VOLUME.split(/\s+/).map((c, i) => {
  const x = 12 + PITCH * i, y = 1250 + c.slice(1) / 3;
  return c[0] === 'C' ? rect(x, y, 8, 1445 - y, CYAN) : rect(x + 0.5, y + 1, 7.5, 1444 - y - 0.5, RED);
}).join(''));

add('macd', MACD.map((v, i) => {
  const x = 15 + PITCH * i, zero = 1953, y = 1640 + v / 3;
  return rect(x, Math.min(zero, y), 2, Math.abs(y - zero), v < 939 ? 'fill="#981e1e"' : 'fill="#339a36"');
}).join(''));

for (const [id, color, base, left, right] of CURVES) {
  const map = (s, dx) => s.split(' ').map(p => {
    const [x, y] = p.split(',').map(Number);
    return (dx + x / 2.904).toFixed(1) + ',' + (base + y / 3).toFixed(1);
  });
  const points = map(left, 0).concat(map(right, 540)).join(' ');
  add(id, `<polyline points="${points}" fill="none" stroke="${color}" stroke-width="1.400"/>`);
}
```
